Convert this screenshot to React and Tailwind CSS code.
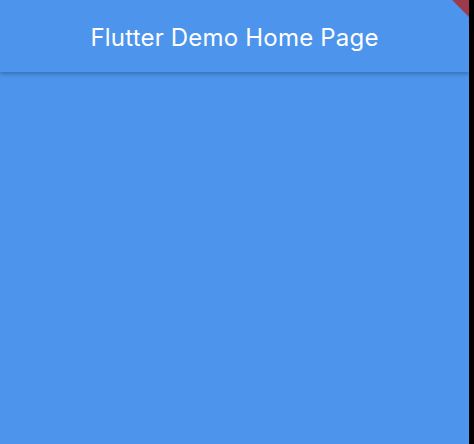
import React from 'react'

const App = () => {
    return (
        <div className='flex h-[444px] w-[474px] overflow-hidden bg-black'>
            <div className='relative flex w-[469px] flex-col overflow-hidden bg-[#4c94ec]'>
                {/* app bar */}
                <header className='z-10 flex h-[72px] shrink-0 justify-center pt-[24px] shadow-[0_2px_4px_rgba(0,0,0,0.25)]'>
                    <h1 className='text-[24px] leading-[28px] tracking-[0.2px] text-white' style={{ fontFamily: 'Inter, "Noto Sans", sans-serif' }}>
                        Flutter Demo Home Page
                    </h1>
                </header>
                <main className='flex-1'></main>
                {/* debug banner corner */}
                <div className='absolute right-[-26px] top-[-14px] h-[14px] w-[80px] rotate-45 bg-[#9c3b4b]'></div>
            </div>
        </div>
    )
}

export default App
